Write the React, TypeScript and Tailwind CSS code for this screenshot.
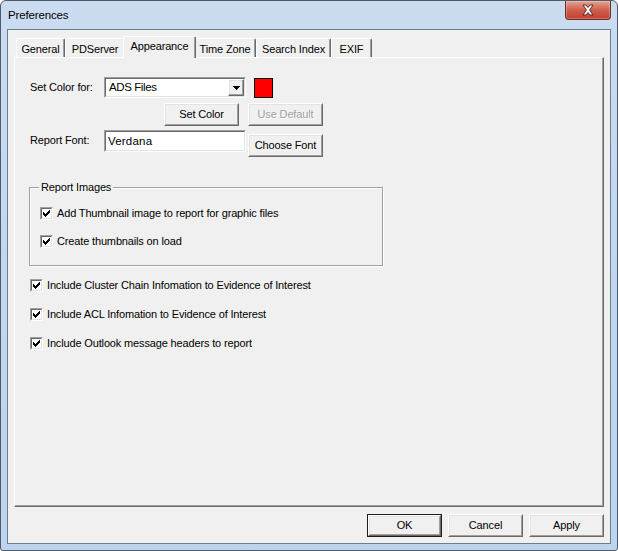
import React from "react";

const F = "font-['Liberation_Sans',Arial,sans-serif] tracking-[-0.15px]";

function Check() {
  const px: [number, number][] = [
    [6, 0],
    [5, 1], [6, 1],
    [0, 2], [4, 2], [5, 2], [6, 2],
    [0, 3], [1, 3], [3, 3], [4, 3], [5, 3],
    [0, 4], [1, 4], [2, 4], [3, 4], [4, 4],
    [1, 5], [2, 5], [3, 5],
    [2, 6],
  ];
  return (
    <svg width="7" height="7" viewBox="0 0 7 7" shapeRendering="crispEdges" className="block">
      {px.map(([x, y], i) => (
        <rect key={i} x={x} y={y} width="1" height="1" fill="#000" />
      ))}
    </svg>
  );
}

function CheckBox({ label }: { label: string }) {
  return (
    <div className="flex items-center h-[17px] gap-[4px]">
      <span className="w-[13px] h-[13px] shrink-0 border border-t-[#a0a0a0] border-l-[#a0a0a0] border-b-white border-r-white">
        <span className="flex items-center justify-center w-[11px] h-[11px] border border-t-[#696969] border-l-[#696969] border-b-[#e3e3e3] border-r-[#e3e3e3] bg-white">
          <Check />
        </span>
      </span>
      <span className="text-[11px] leading-[13px] text-black whitespace-nowrap">{label}</span>
    </div>
  );
}

function Button({
  label,
  w = 75,
  disabled = false,
  isDefault = false,
}: {
  label: string;
  w?: number;
  disabled?: boolean;
  isDefault?: boolean;
}) {
  const inner = (
    <div className="h-full w-full border border-t-white border-l-white border-b-[#696969] border-r-[#696969]">
      <div className="h-full w-full border border-t-[#e3e3e3] border-l-[#e3e3e3] border-b-[#a0a0a0] border-r-[#a0a0a0] bg-[#f0f0f0] flex items-center justify-center">
        <span
          className={
            "text-[11px] leading-[13px] whitespace-nowrap " +
            (disabled ? "text-[#a0a0a0] [text-shadow:1px_1px_0_#fff]" : "text-black")
          }
        >
          {label}
        </span>
      </div>
    </div>
  );
  return (
    <div
      className={"h-[23px] shrink-0 " + (isDefault ? "border border-[#1c1c1c]" : "")}
      style={{ width: w }}
    >
      {inner}
    </div>
  );
}

function Sunken({ children, className = "" }: { children: React.ReactNode; className?: string }) {
  return (
    <div className={"border border-t-[#a0a0a0] border-l-[#a0a0a0] border-b-white border-r-white " + className}>
      <div className="h-full w-full border border-t-[#696969] border-l-[#696969] border-b-[#e3e3e3] border-r-[#e3e3e3] bg-white flex items-center">
        {children}
      </div>
    </div>
  );
}

function Tab({ label, w, selected = false }: { label: string; w: number; selected?: boolean }) {
  if (selected) {
    return (
      <div
        className="relative z-10 -ml-[2px] -mr-[2px] h-[22px] -mb-[1px] self-end bg-[#f0f0f0] border-l border-t border-l-white border-t-white border-r border-r-[#696969] rounded-t-[2px] shadow-[inset_-1px_0_0_#a0a0a0] flex items-start justify-center pt-[2px]"
        style={{ width: w }}
      >
        <span className="text-[11px] leading-[14px] text-black">{label}</span>
      </div>
    );
  }
  return (
    <div
      className="h-[19px] self-end bg-[#f0f0f0] border-l border-t border-l-white border-t-white border-r border-r-[#696969] rounded-t-[2px] shadow-[inset_-1px_0_0_#a0a0a0] flex items-start justify-center pt-[3px]"
      style={{ width: w }}
    >
      <span className="text-[11px] leading-[14px] text-black">{label}</span>
    </div>
  );
}

export default function App() {
  return (
    <div className={"w-[618px] h-[551px] bg-white " + F}>
      <div className="w-[618px] h-[551px] rounded-t-[6px] rounded-b-[3px] border border-[#4e5b6b] bg-gradient-to-b from-[#cbdcf1] via-[#c2d7ef] to-[#bdd4ee] flex flex-col px-[6px] pb-[6px]">
        {/* title bar */}
        <div className="h-[28px] flex items-start justify-between">
          <span className="pl-[1px] pt-[7px] text-[11.5px] leading-[15px] text-black">Preferences</span>
          <div className="w-[46px] h-[19px] rounded-b-[4px] border border-t-0 border-[#6a2d25] bg-gradient-to-b from-[#e6a393] via-[#cf5e4e] to-[#c2402f] shadow-[inset_0_0_0_1px_rgba(255,255,255,0.25)] flex items-center justify-center">
            <svg width="14" height="12" viewBox="0 0 14 12">
              <path
                d="M2 1 L5 1 L7 3.5 L9 1 L12 1 L8.6 6 L12 11 L9 11 L7 8.5 L5 11 L2 11 L5.4 6 Z"
                fill="#ffffff"
                stroke="#4a1f1a"
                strokeWidth="0.9"
                strokeLinejoin="round"
              />
            </svg>
          </div>
        </div>
        {/* client */}
        <div className="flex-1 border border-[#6e7d8e] bg-[#f0f0f0] flex flex-col p-[6px]">
          {/* tab strip */}
          <div className="h-[21px] flex items-end pl-[2px]">
            <Tab label="General" w={49} />
            <Tab label="PDServer" w={60} />
            <Tab label="Appearance" w={73} selected />
            <Tab label="Time Zone" w={62} />
            <Tab label="Search Index" w={75} />
            <Tab label="EXIF" w={41} />
          </div>
          {/* panel */}
          <div className="h-[450px] border border-t-white border-l-white border-b-[#696969] border-r-[#696969] shadow-[inset_-1px_-1px_0_#a0a0a0] bg-[#f0f0f0] pl-[15px] pt-[19px] flex flex-col">
            {/* row 1 */}
            <div className="flex items-center h-[21px]">
              <span className="w-[74px] text-[11px] leading-[13px] text-black">Set Color for:</span>
              <Sunken className="w-[142px] h-[21px]">
                <span className="flex-1 pl-[3px] text-[11.5px] leading-[13px] tracking-[-0.4px] text-black">ADS Files</span>
                <div className="w-[16px] h-[17px] border border-t-white border-l-white border-b-[#696969] border-r-[#696969] shadow-[inset_-1px_-1px_0_#a0a0a0,inset_1px_1px_0_#e3e3e3] bg-[#f0f0f0] flex items-center justify-center">
                  <svg width="7" height="4" viewBox="0 0 7 4" shapeRendering="crispEdges">
                    <path d="M0 0 H7 V1 H6 V2 H5 V3 H4 V4 H3 V3 H2 V2 H1 V1 H0 Z" fill="#000" />
                  </svg>
                </div>
              </Sunken>
              <div className="ml-[8px] w-[19px] h-[20px] border border-[#000] bg-[#ff0000]" />
            </div>
            {/* row 2 */}
            <div className="flex mt-[5px] pl-[134px] gap-[9px]">
              <Button label="Set Color" />
              <Button label="Use Default" disabled />
            </div>
            {/* row 3 */}
            <div className="flex items-start mt-[4px]">
              <span className="w-[74px] h-[21px] flex items-center text-[11px] leading-[13px] text-black">Report Font:</span>
              <Sunken className="w-[142px] h-[22px]">
                <span className="pl-[2px] text-[11.5px] leading-[13px] tracking-[0.2px] text-black">Verdana</span>
              </Sunken>
              <div className="ml-[2px] mt-[4px]">
                <Button label="Choose Font" />
              </div>
            </div>
            {/* group box */}
            <fieldset className="mt-[24px] -ml-[1px] w-[354px] h-[85px] border border-[#a0a0a0] shadow-[inset_1px_1px_0_#fff,1px_1px_0_#fff] pl-[10px]">
              <legend className="-ml-[1px] px-[2px] text-[11px] leading-[13px] text-black">Report Images</legend>
              <div className="mt-[11px] flex flex-col gap-[11px]">
                <CheckBox label="Add Thumbnail image to report for graphic files" />
                <CheckBox label="Create thumbnails on load" />
              </div>
            </fieldset>
            <div className="mt-[11px] flex flex-col gap-[12px]">
              <CheckBox label="Include Cluster Chain Infomation to Evidence of Interest" />
              <CheckBox label="Include ACL Infomation to Evidence of Interest" />
              <CheckBox label="Include Outlook message headers to report" />
            </div>
          </div>
          {/* buttons */}
          <div className="mt-[7px] flex justify-end gap-[6px]">
            <Button label="OK" isDefault />
            <Button label="Cancel" />
            <Button label="Apply" />
          </div>
        </div>
      </div>
    </div>
  );
}
